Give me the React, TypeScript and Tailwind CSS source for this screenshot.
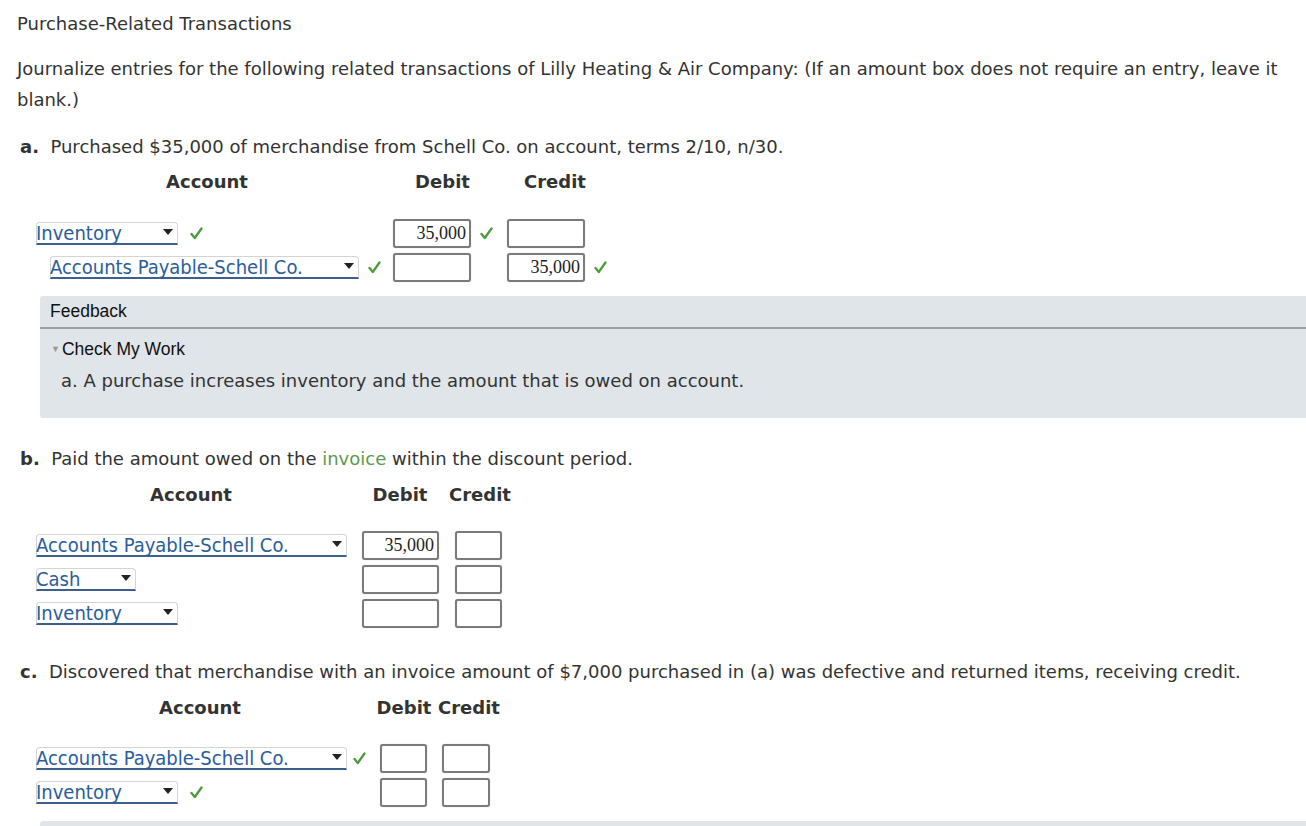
import React from 'react';

const body = { fontFamily: '"DejaVu Sans", Verdana, sans-serif' };
const narrow = { fontFamily: '"DejaVu Sans Condensed", "DejaVu Sans", sans-serif' };
const helv = { fontFamily: '"Liberation Sans", Arial, sans-serif' };
const serif = { fontFamily: '"Liberation Serif", "Times New Roman", serif' };

function Check() {
    return (
        <svg width="13" height="13" viewBox="0 0 13 13" className="shrink-0">
            <path d="M1.5 7 L4.8 11 L11.5 1.5" fill="none" stroke="#4d9a3f" strokeWidth="2.3" strokeLinecap="round" strokeLinejoin="round" />
        </svg>
    );
}

function Select({ label, width }: { label: string; width: number }) {
    return (
        <div
            className="flex items-end justify-between h-[23px] bg-white border border-[#d4d4d4] border-b-2 border-b-[#3c5f8d] rounded-t-[4px] pr-[4px] shrink-0"
            style={{ width }}
        >
            <span className="text-[20px] leading-[20px] text-[#2b5d9c] -ml-[1px] whitespace-nowrap" style={narrow}>{label}</span>
            <svg width="10" height="7" viewBox="0 0 10 7" className="self-center">
                <path d="M0 0 L10 0 L5 6 Z" fill="#222" />
            </svg>
        </div>
    );
}

function Amount({ value, width }: { value?: string; width: number }) {
    return (
        <div
            className="h-[29px] bg-white border-2 border-[#7b7b7b] rounded-[3px] shadow-[0_0_1px_rgba(0,0,0,0.3)] flex items-center justify-end pr-[3px] text-[18px] text-[#222] shrink-0"
            style={{ width, ...serif }}
        >
            {value}
        </div>
    );
}

function Header({ cols }: { cols: [string, number][] }) {
    return (
        <div className="flex h-[31px] items-center font-bold text-[18px] text-[#333]">
            {cols.map(([t, w], i) => (
                <div key={i} className="flex justify-center whitespace-nowrap" style={{ width: w }}>{t}</div>
            ))}
        </div>
    );
}

export default function App() {
    return (
        <div className="bg-white min-h-screen text-[#333] text-[18px] overflow-hidden" style={body}>
            <div className="pl-[17px] h-[47px] flex items-center">Purchase-Related Transactions</div>

            <div className="pl-[17px] pr-[10px] mt-[6px] leading-[31px]">
                Journalize entries for the following related transactions of Lilly Heating &amp; Air Company: (If an amount box does not require an entry, leave it blank.)
            </div>

            {/* a */}
            <div className="pl-[20px] mt-[16px] leading-[31px]">
                <span className="font-bold">a.</span>&nbsp; Purchased $35,000 of merchandise from Schell Co. on account, terms 2/10, n/30.
            </div>
            <div className="pl-[36px] mt-[4px]">
                <Header cols={[['Account', 342], ['Debit', 129], ['Credit', 96]]} />
                <div className="mt-[19px]">
                    <div className="flex items-center h-[34px]">
                        <div className="flex items-center gap-[12px] w-[357px]">
                            <Select label="Inventory" width={142} />
                            <Check />
                        </div>
                        <div className="flex items-center gap-[9px] w-[114px]">
                            <Amount value="35,000" width={78} />
                            <Check />
                        </div>
                        <Amount width={78} />
                    </div>
                    <div className="flex items-center h-[34px]">
                        <div className="flex items-center gap-[9px] w-[357px] pl-[14px]">
                            <Select label="Accounts Payable-Schell Co." width={309} />
                            <Check />
                        </div>
                        <div className="w-[114px]">
                            <Amount width={78} />
                        </div>
                        <div className="flex items-center gap-[9px]">
                            <Amount value="35,000" width={78} />
                            <Check />
                        </div>
                    </div>
                </div>
            </div>

            <div className="ml-[40px] mt-[12px] h-[122px] bg-[#dfe5e8] rounded-tl-[3px] rounded-bl-[3px]">
                <div className="h-[31px] flex items-center pl-[10px] text-[17.5px] text-[#111]" style={helv}>Feedback</div>
                <div className="h-[2px] bg-[#989ea2]" />
                <div className="h-[33px] flex items-end pl-[11px] text-[17.5px] text-[#111]" style={helv}>
                    <span className="text-[9px] text-[#999] mr-[2px] mb-[6px]">&#9660;</span>Check My Work
                </div>
                <div className="pl-[21px] leading-[31px] mt-[3px]">a. A purchase increases inventory and the amount that is owed on account.</div>
            </div>

            {/* b */}
            <div className="pl-[20px] mt-[25px] leading-[31px]">
                <span className="font-bold">b.</span>&nbsp; Paid the amount owed on the <span className="text-[#5b9a4c]">invoice</span> within the discount period.
            </div>
            <div className="pl-[36px] mt-[5px]">
                <Header cols={[['Account', 310], ['Debit', 108], ['Credit', 52]]} />
                <div className="mt-[18px]">
                    <div className="flex items-center h-[34px]">
                        <div className="w-[326px]"><Select label="Accounts Payable-Schell Co." width={311} /></div>
                        <div className="w-[93px]"><Amount value="35,000" width={77} /></div>
                        <Amount width={47} />
                    </div>
                    <div className="flex items-center h-[34px]">
                        <div className="w-[326px]"><Select label="Cash" width={100} /></div>
                        <div className="w-[93px]"><Amount width={77} /></div>
                        <Amount width={47} />
                    </div>
                    <div className="flex items-center h-[34px]">
                        <div className="w-[326px]"><Select label="Inventory" width={142} /></div>
                        <div className="w-[93px]"><Amount width={77} /></div>
                        <Amount width={47} />
                    </div>
                </div>
            </div>

            {/* c */}
            <div className="pl-[20px] mt-[26px] leading-[31px]">
                <span className="font-bold">c.</span>&nbsp; Discovered that merchandise with an invoice amount of $7,000 purchased in (a) was defective and returned items, receiving credit.
            </div>
            <div className="pl-[36px] mt-[5px]">
                <Header cols={[['Account', 328], ['Debit', 80], ['Credit', 50]]} />
                <div className="mt-[18px]">
                    <div className="flex items-center h-[34px]">
                        <div className="flex items-center gap-[6px] w-[344px]">
                            <Select label="Accounts Payable-Schell Co." width={311} />
                            <Check />
                        </div>
                        <div className="w-[62px]"><Amount width={47} /></div>
                        <Amount width={48} />
                    </div>
                    <div className="flex items-center h-[34px]">
                        <div className="flex items-center gap-[12px] w-[344px]">
                            <Select label="Inventory" width={142} />
                            <Check />
                        </div>
                        <div className="w-[62px]"><Amount width={47} /></div>
                        <Amount width={48} />
                    </div>
                </div>
            </div>

            <div className="ml-[40px] mt-[12px] h-[40px] bg-[#dfe5e8] rounded-tl-[3px]" />
        </div>
    );
}
